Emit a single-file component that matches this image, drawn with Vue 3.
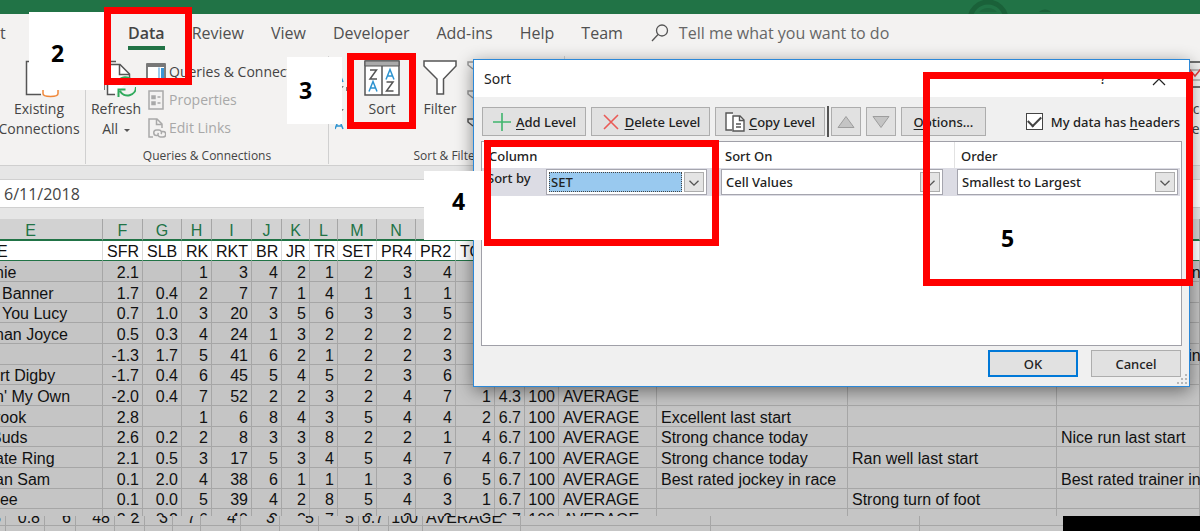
<script setup>
import { ref } from 'vue'

const tabs = ['Review', 'View', 'Developer', 'Add-ins', 'Help', 'Team']

const columns = [
  { letter: 'E', name: 'E', width: 103 },
  { letter: 'F', name: 'SFR', width: 40 },
  { letter: 'G', name: 'SLB', width: 39 },
  { letter: 'H', name: 'RK', width: 30 },
  { letter: 'I', name: 'RKT', width: 40 },
  { letter: 'J', name: 'BR', width: 30 },
  { letter: 'K', name: 'JR', width: 28 },
  { letter: 'L', name: 'TR', width: 28 },
  { letter: 'M', name: 'SET', width: 39 },
  { letter: 'N', name: 'PR4', width: 39 },
  { letter: 'O', name: 'PR2', width: 40 },
  { letter: 'P', name: 'TOT', width: 39 },
  { letter: 'Q', name: '', width: 30 },
  { letter: 'R', name: '', width: 34 },
  { letter: 'S', name: '', width: 98 },
  { letter: 'T', name: '', width: 191 },
  { letter: 'U', name: '', width: 209 },
  { letter: 'V', name: '', width: 143 },
]

const rows = [
  { cut: 'short', cells: ['nie', '2.1', '', 1, 3, 4, 2, 1, 2, 3, 4, '', '', '', '', '', '', 'Best rated trainer in race'] },
  { cut: 'none', cells: ['Banner', '1.7', '0.4', 2, 7, 7, 1, 4, 1, 1, 1, '', '', '', '', '', '', ''] },
  { cut: 'none', cells: ['You Lucy', '0.7', '1.0', 3, 20, 3, 5, 6, 3, 3, 5, '', '', '', '', '', '', ''] },
  { cut: 'short', cells: ['nan Joyce', '0.5', '0.3', 4, 24, 1, 3, 2, 2, 2, 2, '', '', '', '', '', '', ''] },
  { cut: 'none', cells: ['', '-1.3', '1.7', 5, 41, 6, 2, 1, 2, 2, 3, '', '', '', '', '', '', 'Best rated trainer in race'] },
  { cut: 'edge', cells: ['rt Digby', '-1.7', '0.4', 6, 45, 5, 4, 5, 2, 3, 6, '', '', '', '', '', '', ''] },
  { cut: 'short', cells: ["n' My Own", '-2.0', '0.4', 7, 52, 2, 2, 3, 2, 4, 7, 1, '4.3', 100, 'AVERAGE', '', '', ''] },
  { cut: 'short', cells: ['rook', '2.8', '', 1, 6, 8, 4, 3, 5, 4, 4, 2, '6.7', 100, 'AVERAGE', 'Excellent last start', '', ''] },
  { cut: 'long', cells: ['Buds', '2.6', '0.2', 2, 8, 3, 3, 8, 2, 2, 1, 4, '6.7', 100, 'AVERAGE', 'Strong chance today', '', 'Nice run last start'] },
  { cut: 'short', cells: ['ate Ring', '2.1', '0.5', 3, 17, 5, 3, 4, 5, 4, 7, 4, '6.7', 100, 'AVERAGE', 'Strong chance today', 'Ran well last start', ''] },
  { cut: 'short', cells: ['an Sam', '0.1', '2.0', 4, 38, 6, 1, 1, 1, 3, 6, 5, '6.7', 100, 'AVERAGE', 'Best rated jockey in race', '', 'Best rated trainer in race'] },
  { cut: 'long', cells: ['bee', '0.1', '0.0', 5, 39, 4, 2, 8, 5, 4, 3, 1, '6.7', 100, 'AVERAGE', '', 'Strong turn of foot', ''] },
]
const cutRow = ['', '2.2', '0.2', 6, '40', 3, 2, 7, 2, 3, 2, 3, '6.7', 100, 'AVERAGE', '', '', '']

const strip = [
  { text: '3', width: 6 },
  { text: '0.8', width: 39 },
  { text: '6', width: 31 },
  { text: '48', width: 39 },
  { text: '2', width: 30 },
  { text: '3', width: 28 },
  { text: '7', width: 28 },
  { text: '4', width: 40 },
  { text: '3', width: 39 },
  { text: '5', width: 39 },
  { text: '5', width: 40 },
  { text: '6.7', width: 30 },
  { text: '100', width: 34 },
  { text: 'AVERAGE', width: 98, left: true },
  { text: '', width: 190 },
  { text: '', width: 209 },
]

const formula = ref('6/11/2018')
const sortBy = ref('SET')
const sortOn = ref('Cell Values')
const order = ref('Smallest to Largest')
const hasHeaders = ref(true)
</script>

<template>
  <div class="app">
    <header class="titlebar">
      <svg class="swirl" width="120" height="14" viewBox="0 0 120 14">
        <circle cx="28" cy="20" r="18" fill="none" stroke="#1a6139" stroke-width="5" />
        <path d="M19 12a12 12 0 0 1 18 0z" fill="#1d683e" />
        <path d="M79 12a7 5 0 0 1 12 0z" fill="#1a6139" />
      </svg>
    </header>

    <nav class="tabs">
      <a href="#" class="tab first">t</a>
      <a href="#" class="tab active">Data</a>
      <a v-for="t in tabs" :key="t" href="#" class="tab">{{ t }}</a>
      <a href="#" class="tab tell">
        <svg width="18" height="18" viewBox="0 0 18 18" fill="none" stroke="#555" stroke-width="1.3">
          <circle cx="11" cy="6.5" r="5.5" /><path d="M7 10.5 1 17" />
        </svg>
        Tell me what you want to do
      </a>
    </nav>

    <section class="ribbon">
      <div class="group g-get">
        <div class="tools">
          <button class="big">
            <svg width="40" height="38" viewBox="0 0 40 38" fill="none">
              <path d="M22 34.500H7.500V1.500H24L33 10V28" fill="#fff" stroke="#555" stroke-width="1.500" />
              <path d="M24 24V33.500c0 4 15 4 15 0V24c0-4-15-4-15 0z" fill="#fff" stroke="#f0883a" stroke-width="1.500" />
            </svg>
            <span>Existing<br />Connections</span>
          </button>
        </div>
      </div>

      <div class="group g-query">
        <div class="tools">
          <button class="big">
            <svg width="40" height="38" viewBox="0 0 40 38" fill="none">
              <path d="M8 30V1.500H20" stroke="#555" stroke-width="1.500" />
              <path d="M19 34.500H11.500V4.500H24L33.500 14V20" fill="#fff" stroke="#555" stroke-width="1.500" />
              <path d="M23.500 4.500V14.500H34" stroke="#555" stroke-width="1.500" />
              <path d="M22 24v-2a8 8 0 0 1 14-1M40 27a8.500 8.500 0 0 1-16 4M22.500 37v-7.500H29.500" stroke="#2faa5c" stroke-width="2" />
            </svg>
            <span>Refresh<br />All <i class="caret"></i></span>
          </button>
          <div class="list">
            <button class="small">
              <svg width="20" height="20" viewBox="0 0 20 20">
                <path d="M1 2h18v16H1z" fill="#fff" stroke="#555" stroke-width="1.500" />
                <path d="M1 1.500h18V5H1z" fill="#777" />
                <path d="M12.500 5.500h1v12h-1zM15 6h3v11.500h-3z" fill="#3b95d6" />
              </svg>
              Queries &amp; Connections
            </button>
            <button class="small" disabled>
              <svg width="20" height="20" viewBox="0 0 20 20" fill="none" stroke="#a9a9a9" stroke-width="1.500">
                <path d="M3 1h14v18H3z" />
                <path d="M6 6h3v2.500H6zM6 12h3v2.500H6z" fill="#a9a9a9" />
                <path d="M11.500 7h3M11.500 13h3" />
              </svg>
              Properties
            </button>
            <button class="small" disabled>
              <svg width="20" height="20" viewBox="0 0 20 20" fill="none" stroke="#a9a9a9" stroke-width="1.500">
                <path d="M7 19H3V1H11L16 6V10M10.500 1V6.500H16" />
                <path d="M11.500 17.500H10.500a2.500 2.500 0 0 1 0-5.500H13a2.500 2.500 0 0 1 2 4M14.500 13.500H17a2.500 2.500 0 0 1 0 5.500H14.500a2.500 2.500 0 0 1-2-4" />
              </svg>
              Edit Links
            </button>
          </div>
        </div>
        <div class="label">Queries &amp; Connections</div>
      </div>

      <div class="group g-sort">
        <div class="tools">
          <svg class="az" width="14" height="72" viewBox="0 0 14 72" fill="none" stroke="#2d93d0" stroke-width="1.500">
            <path d="M0 22 4 12 8 22M1 19h6M0 69 4 59 8 69M1 66h6" />
            <path d="M1 27h6L1 33h6M1 50h6L1 56h6" stroke="#555" />
            <path d="M12 27v4" stroke="#555" />
          </svg>
          <button class="big sort">
            <svg width="36" height="38" viewBox="0 0 36 38" fill="none">
              <path d="M1 1h34v34H1z" fill="#fff" stroke="#555" stroke-width="1.500" />
              <path d="M1 1h34v5H1z" fill="#aaa" stroke="#555" />
              <path d="M18 6V35" stroke="#555" stroke-width="1.500" />
              <path d="M6 10h6.500L6 19h7M22.500 22h6.500L22.500 31h7" stroke="#555" stroke-width="1.500" />
              <path d="M5 31.500 9 21.500 13 31.500M6.500 28h5M22 19.500 26 9.500 30 19.500M23.500 16h5" stroke="#2d93d0" stroke-width="1.500" />
            </svg>
            <span>Sort</span>
          </button>
          <button class="big filter">
            <svg width="36" height="38" viewBox="0 0 36 38">
              <path d="M2 1H34V6L21.500 19V34H15V19L2 6z" fill="#fff" stroke="#555" stroke-width="1.500" />
            </svg>
            <span>Filter</span>
          </button>
          <svg class="minis" width="16" height="72" viewBox="0 0 16 72" fill="none" stroke="#999" stroke-width="1.500">
            <path d="M14 2H1V5L6 9M14 31H1V34L6 38" /><path d="M14 59H1V62L6 66" stroke="#555" />
          </svg>
        </div>
        <div class="label">Sort &amp; Filter</div>
      </div>

      <div class="group g-rest">
        <div class="tools">
          <button class="big">
            <svg width="40" height="38" viewBox="0 0 40 38" fill="none">
              <path d="M0 2h40M0 27h40" stroke="#444" stroke-width="1.500" />
              <path d="M0 10h40M0 20h40" stroke="#888" />
              <path d="M0 14l5-4 5 6 5-6 5 6 5-6 5 6" stroke="#e04040" stroke-width="1.500" />
            </svg>
            <span>ecast<br />eet</span>
          </button>
        </div>
      </div>
    </section>

    <div class="formula">
      <input v-model="formula" type="text" aria-label="Formula bar" />
    </div>

    <main class="sheet">
      <table class="grid">
        <colgroup>
          <col v-for="c in columns" :key="c.letter" :style="{ width: c.width + 'px' }" />
        </colgroup>
        <thead>
          <tr class="letters">
            <th v-for="(c, i) in columns" :key="c.letter" :class="{ wide: i === 0 }">{{ c.letter }}</th>
          </tr>
          <tr class="names">
            <th v-for="(c, i) in columns" :key="c.letter" :class="{ name: i === 0 }">{{ c.name }}</th>
          </tr>
        </thead>
        <tbody>
          <tr v-for="(r, ri) in rows" :key="ri">
            <td
              v-for="(v, i) in r.cells"
              :key="i"
              :class="[i === 0 ? 'name cut-' + r.cut : i > 13 ? 'text' : 'num']"
            >{{ v }}</td>
          </tr>
          <tr class="cut-row">
            <td v-for="(v, i) in cutRow" :key="i" :class="i > 13 ? 'text' : 'num'"><div>{{ v }}</div></td>
          </tr>
        </tbody>
      </table>
      <div class="strip">
        <span
          v-for="(s, i) in strip"
          :key="i"
          class="scell"
          :class="{ left: s.left }"
          :style="{ width: s.width + 'px' }"
        ><b>{{ s.text }}</b></span>
        <span class="scell rest"><b></b></span>
        <span class="black"></span>
      </div>
    </main>

    <section class="dialog" role="dialog" aria-label="Sort">
      <div class="d-title">
        <span>Sort</span>
        <button class="plain help" aria-label="Help">?</button>
        <button class="plain" aria-label="Close">
          <svg width="14" height="14" viewBox="0 0 14 14" stroke="#222" stroke-width="1.200"><path d="M1 1 13 13M13 1 1 13" /></svg>
        </button>
      </div>
      <div class="d-tools">
        <button class="btn add">
          <svg width="20" height="20" viewBox="0 0 20 20" stroke="#3fb56d" stroke-width="1.600"><path d="M10 1V19M1 10H19" /></svg>
          <span><u>A</u>dd Level</span>
        </button>
        <button class="btn del">
          <svg width="20" height="20" viewBox="0 0 20 20" stroke="#ea5b57" stroke-width="1.600"><path d="M3 3 17 17M17 3 3 17" /></svg>
          <span><u>D</u>elete Level</span>
        </button>
        <button class="btn copy">
          <svg width="20" height="20" viewBox="0 0 20 20" fill="#fff" stroke="#555" stroke-width="1.400">
            <path d="M7 18H1V1H8" /><path d="M8 4H15L19 8V19H8z" /><path d="M14.500 4V8.500H19M11 12h5M11 15h5" fill="none" />
          </svg>
          <span><u>C</u>opy Level</span>
        </button>
        <i class="sep"></i>
        <button class="btn arrow" disabled aria-label="Move up">
          <svg width="20" height="14" viewBox="0 0 20 14"><path d="M10 1.500 18 12.500H2z" fill="#c4c4c4" stroke="#9d9d9d" /></svg>
        </button>
        <button class="btn arrow" disabled aria-label="Move down">
          <svg width="20" height="14" viewBox="0 0 20 14"><path d="M10 12.500 2 1.500H18z" fill="#c4c4c4" stroke="#9d9d9d" /></svg>
        </button>
        <button class="btn options"><span><u>O</u>ptions...</span></button>
        <label class="check">
          <input v-model="hasHeaders" type="checkbox" />
          <span>My data has <u>h</u>eaders</span>
        </label>
      </div>
      <div class="d-list">
        <div class="d-head">
          <span>Column</span><span>Sort On</span><span class="ruled">Order</span>
        </div>
        <div class="d-row">
          <div class="cell by">
            <label for="sort-by">Sort by</label>
            <span class="combo focus">
              <select id="sort-by" v-model="sortBy"><option>SET</option></select>
              <svg width="20" height="20" viewBox="0 0 20 20" fill="none" stroke="#555" stroke-width="1.500"><path d="M5 8.500 10 13.500 15 8.500" /></svg>
            </span>
          </div>
          <div class="cell">
            <span class="combo">
              <select v-model="sortOn" aria-label="Sort On"><option>Cell Values</option></select>
              <svg width="20" height="20" viewBox="0 0 20 20" fill="none" stroke="#555" stroke-width="1.500"><path d="M5 8.500 10 13.500 15 8.500" /></svg>
            </span>
          </div>
          <div class="cell last">
            <span class="combo">
              <select v-model="order" aria-label="Order"><option>Smallest to Largest</option></select>
              <svg width="20" height="20" viewBox="0 0 20 20" fill="none" stroke="#555" stroke-width="1.500"><path d="M5 8.500 10 13.500 15 8.500" /></svg>
            </span>
          </div>
        </div>
      </div>
      <div class="d-foot">
        <button class="btn ok">OK</button>
        <button class="btn cancel">Cancel</button>
      </div>
      <svg class="grip" width="12" height="12" viewBox="0 0 12 12" fill="#b8b8b8">
        <path d="M8 0h2v2H8zM4 4h2v2H4zM8 4h2v2H8zM0 8h2v2H0zM4 8h2v2H4zM8 8h2v2H8z" />
      </svg>
    </section>

    <div class="note n2">2</div>
    <div class="note n3">3</div>
    <div class="note n4">4</div>
    <div class="note n5">5</div>
    <div class="box b2"></div>
    <div class="box b3"></div>
    <div class="box b4"></div>
    <div class="box b5"></div>
  </div>
</template>

<style>
body {
  overflow: hidden;
}
</style>

<style scoped>
.app {
  position: relative;
  min-height: 100vh;
  overflow: hidden;
  background: #e6e6e6;
  color: #444;
  font-family: "Open Sans", "Noto Sans", sans-serif;
}
.app * {
  box-sizing: border-box;
}
svg {
  flex: none;
  display: block;
}
button {
  margin: 0;
  padding: 0;
  border: 0;
  background: none;
  font: inherit;
  color: inherit;
}

.titlebar {
  display: flex;
  justify-content: flex-end;
  height: 14px;
  padding-right: 120px;
  background: #217346;
}

.tabs {
  display: flex;
  gap: 27px;
  height: 40px;
  background: #f3f2f1;
  font-size: 16px;
  line-height: 38px;
}
.tab {
  color: #505050;
  text-decoration: none;
  white-space: nowrap;
}
.tab.first {
  width: 101px;
}
.tab.active {
  height: 36px;
  border-bottom: 4px solid #217346;
  color: #444;
  font-weight: 600;
}
.tab.tell {
  display: flex;
  align-items: center;
  gap: 10px;
  height: 38px;
  padding-left: 1px;
  color: #666;
}

.ribbon {
  display: flex;
  height: 112px;
  border-bottom: 1px solid #cfcfcf;
  background: #f3f2f1;
  font-size: 14px;
  line-height: 20px;
}
.group {
  display: flex;
  flex: none;
  flex-direction: column;
  justify-content: space-between;
  margin: 2px 0 1px;
  border-right: 1px solid #d0d0d0;
}
.g-get {
  width: 86px;
}
.g-query {
  width: 243px;
}
.g-sort {
  width: 236px;
}
.g-rest {
  flex: 1;
  align-items: flex-end;
  border: 0;
}
.tools {
  display: flex;
  padding-top: 4px;
}
.big {
  display: flex;
  flex-direction: column;
  align-items: center;
  gap: 1px;
  white-space: nowrap;
}
.g-get .big {
  width: 78px;
}
.g-query .big {
  width: 60px;
}
.g-rest .big {
  width: 15px;
  align-items: flex-start;
}
.caret {
  display: inline-block;
  margin-left: 2px;
  border: 3px solid transparent;
  border-top-color: #555;
  vertical-align: -1px;
}
.small {
  display: flex;
  align-items: center;
  gap: 3px;
  height: 28px;
  white-space: nowrap;
}
.small:disabled {
  color: #a8a8a8;
}
.g-query .list {
  margin-top: -2px;
  overflow: hidden;
}
.label {
  font-size: 12px;
  line-height: 16px;
  text-align: center;
  white-space: nowrap;
}
.az {
  margin-left: 6px;
}
.big.sort {
  width: 66px;
}
.big.filter {
  width: 50px;
}
.minis {
  margin-left: 2px;
}

.formula {
  padding: 13px 0 11px;
}
.formula input {
  display: block;
  width: 100%;
  height: 29px;
  padding: 0 4px;
  border: 1px solid #d0d0d0;
  border-width: 1px 0;
  border-radius: 0;
  background: #fff;
  color: #444;
  font: 16px "Open Sans", sans-serif;
}

.sheet {
  background: #c5c5c5;
  color: #111;
  font: 16px/17px "Liberation Sans", Arial, sans-serif;
}
.grid {
  width: 100%;
  table-layout: fixed;
  border-collapse: separate;
  border-spacing: 0;
}
.grid th,
.grid td {
  height: 21px;
  padding: 3px 3px 0;
  border-right: 1px solid #a6a6a6;
  border-bottom: 1px solid #a6a6a6;
  font-weight: 400;
  line-height: 17px;
  white-space: nowrap;
}
.grid tbody tr:nth-child(3n) td {
  height: 20px;
  padding-top: 2px;
}
.grid .letters th {
  height: 22px;
  border-bottom: 2px solid #217346;
  background: #d2d2d2;
  color: #217346;
}
.grid .letters .wide {
  padding-right: 44px;
}
.grid .names th {
  height: 20px;
  padding: 2px 0 0 4px;
  overflow: hidden;
  border-right-color: #d9d9d9;
  border-bottom: 1px solid #217346;
  background: #fff;
  text-align: left;
}
.grid .name {
  padding-left: 0;
  overflow: hidden;
}
.grid .names .name {
  padding-left: 0;
  text-indent: -3px;
}
.grid .num {
  text-align: right;
}
.grid .text {
  padding-left: 4px;
}
.cut-none {
  text-indent: 2px;
}
.cut-short {
  text-indent: -5px;
}
.cut-long {
  text-indent: -9px;
}
.grid tbody .cut-row td {
  height: 7px;
  padding-top: 0;
  border-bottom: 0;
}
.cut-row div {
  height: 7px;
  overflow: hidden;
  line-height: 22px;
}

.strip {
  display: flex;
  height: 15px;
  line-height: 15px;
}
.scell {
  flex: none;
  border-right: 1px solid #a6a6a6;
}
.scell b {
  display: flex;
  align-items: flex-end;
  justify-content: flex-end;
  height: 10px;
  padding-right: 4px;
  overflow: hidden;
  border-bottom: 1px solid #a6a6a6;
  font-weight: 400;
}
.scell.left b {
  justify-content: flex-start;
  padding: 0 3px;
}
.scell.rest {
  flex: 1;
  border: 0;
}
.black {
  width: 137px;
  background: #000;
}

.dialog {
  position: absolute;
  top: 59px;
  left: 473px;
  width: 717px;
  border: 1px solid #2b88d8;
  background: #f0f0f0;
  box-shadow: 0 4px 16px rgba(0, 0, 0, 0.45);
  color: #222;
  font-family: "Noto Sans", "Open Sans", sans-serif;
  font-size: 13px;
  line-height: 18px;
}
.d-title {
  display: flex;
  align-items: center;
  height: 37px;
  padding: 0 23px 0 10px;
  background: #fff;
  font-size: 14px;
}
.d-title span {
  flex: 1;
}
.help {
  margin-right: 46px;
}
.d-tools {
  display: flex;
  align-items: center;
  gap: 5px;
  padding: 9px 9px 4px 8px;
}
.btn {
  display: flex;
  align-items: center;
  justify-content: center;
  gap: 4px;
  height: 29px;
  border: 1px solid #adadad;
  background: #e1e1e1;
  font-weight: 500;
  white-space: nowrap;
}
u {
  text-underline-offset: 2px;
}
.add {
  width: 104px;
}
.del {
  width: 119px;
}
.copy {
  width: 110px;
}
.sep {
  width: 2px;
  height: 31px;
  margin: 0 -3px;
  background: #555;
}
.arrow {
  width: 30px;
}
.options {
  width: 85px;
}
.check {
  display: flex;
  flex: 1;
  align-items: center;
  justify-content: flex-end;
  gap: 8px;
  font-weight: 500;
  white-space: nowrap;
}
.check input {
  appearance: none;
  display: grid;
  place-items: center;
  width: 17px;
  height: 17px;
  margin: 0;
  border: 1px solid #444;
  background: #fff;
}
.check input:checked::before {
  content: "";
  width: 11px;
  height: 6px;
  border: solid #444;
  border-width: 0 0 2px 2px;
  rotate: -45deg;
  translate: 0 -2px;
}
.d-list {
  height: 205px;
  margin: 0 7px;
  border: 1px solid #a0a0a8;
  background: #fff;
}
.d-head,
.d-row {
  display: grid;
  grid-template-columns: 236px 236px 1fr;
  font-weight: 500;
}
.d-head span {
  height: 26px;
  padding-left: 7px;
  line-height: 28px;
}
.d-head .ruled {
  border-left: 1px solid #e2e2e2;
  padding-left: 6px;
}
.d-row {
  margin-right: 1px;
  background: #dcdce4;
}
.cell {
  display: flex;
  padding: 1px 11px 1px 3px;
}
.cell.by {
  justify-content: space-between;
  padding-left: 5px;
}
.cell.last {
  padding-right: 2px;
}
.combo {
  display: flex;
  flex: 1;
  align-items: center;
  height: 26px;
  padding: 2px;
  border: 1px solid #a5a5ae;
  background: #fff;
}
.by .combo {
  flex: none;
  width: 161px;
}
.combo select {
  flex: 1;
  appearance: none;
  height: 20px;
  margin: 0;
  padding: 0 2px;
  border: 0;
  border-radius: 0;
  background: #fff;
  color: #222;
  font: 500 13px "Noto Sans", "Open Sans", sans-serif;
}
.combo.focus select {
  margin-right: 2px;
  padding: 0 1px;
  border: 1px dotted #444;
  background: #99c9ef;
}
.combo svg {
  border: 1px solid #adadad;
  background: #e4e4e4;
}
.d-foot {
  display: flex;
  justify-content: flex-end;
  gap: 13px;
  padding: 4px 8px 9px;
}
.ok,
.cancel {
  width: 90px;
  height: 27px;
}
.ok {
  border: 2px solid #0078d7;
}
.grip {
  position: absolute;
  right: 0;
  bottom: 0;
}

.note {
  position: absolute;
  display: grid;
  place-items: center;
  background: #fff;
  color: #000;
  font-size: 23px;
  font-weight: 700;
  line-height: 24px;
}
.n2 {
  top: 12px;
  left: 29px;
  width: 75px;
  height: 78px;
  padding: 4px 18px 0 0;
}
.n3 {
  top: 57px;
  left: 287px;
  width: 55px;
  height: 67px;
  padding: 0 18px 2px 0;
}
.n4 {
  top: 171px;
  left: 424px;
  width: 61px;
  height: 69px;
  padding: 0 0 10px 8px;
}
.n5 {
  top: 226px;
  left: 1001px;
  background: none;
}
.box {
  position: absolute;
  border: 7px solid #f00;
}
.b2 {
  top: 7px;
  left: 104px;
  width: 88px;
  height: 78px;
}
.b3 {
  top: 53px;
  left: 347px;
  width: 69px;
  height: 76px;
}
.b4 {
  top: 140px;
  left: 484px;
  width: 235px;
  height: 106px;
}
.b5 {
  top: 72px;
  left: 923px;
  width: 270px;
  height: 214px;
}
</style>
